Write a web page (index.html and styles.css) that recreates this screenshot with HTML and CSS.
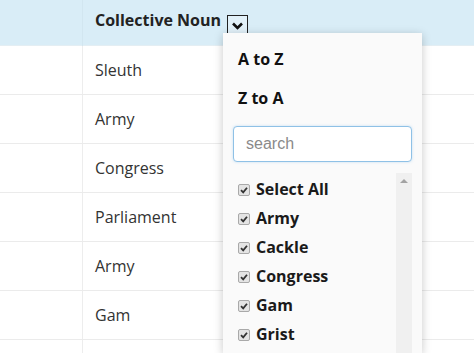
FILE: index.html
```html
<!DOCTYPE html>
<html>
<head>
    <title>Collective Nouns</title>
    <link rel="stylesheet" href="styles.css">
</head>
<body>
    <div class="page">
        <table class="grid">
            <thead>
                <tr>
                    <th class="col-animal"></th>
                    <th class="col-noun">Collective Noun <span class="filter-btn"><svg width="13" height="10" viewBox="0 0 13 10"><path d="M2 2.5 L6.5 7 L11 2.5" fill="none" stroke="#111" stroke-width="2.6"/></svg></span></th>
                </tr>
            </thead>
            <tbody>
                <tr><td></td><td>Sleuth</td></tr>
                <tr><td></td><td>Army</td></tr>
                <tr><td></td><td>Congress</td></tr>
                <tr><td></td><td>Parliament</td></tr>
                <tr><td></td><td>Army</td></tr>
                <tr><td></td><td>Gam</td></tr>
                <tr><td></td><td></td></tr>
            </tbody>
        </table>

        <div class="menu">
            <div class="sort-item">A to Z</div>
            <div class="sort-item">Z to A</div>
            <input class="search" type="text" placeholder="search">
            <div class="options">
                <ul class="option-list">
                    <li><span class="check"><svg width="10" height="10" viewBox="0 0 10 10"><path d="M2 5.2 L4.2 7.4 L8 2.8" fill="none" stroke="#333" stroke-width="1.8"/></svg></span>Select All</li>
                    <li><span class="check"><svg width="10" height="10" viewBox="0 0 10 10"><path d="M2 5.2 L4.2 7.4 L8 2.8" fill="none" stroke="#333" stroke-width="1.8"/></svg></span>Army</li>
                    <li><span class="check"><svg width="10" height="10" viewBox="0 0 10 10"><path d="M2 5.2 L4.2 7.4 L8 2.8" fill="none" stroke="#333" stroke-width="1.8"/></svg></span>Cackle</li>
                    <li><span class="check"><svg width="10" height="10" viewBox="0 0 10 10"><path d="M2 5.2 L4.2 7.4 L8 2.8" fill="none" stroke="#333" stroke-width="1.8"/></svg></span>Congress</li>
                    <li><span class="check"><svg width="10" height="10" viewBox="0 0 10 10"><path d="M2 5.2 L4.2 7.4 L8 2.8" fill="none" stroke="#333" stroke-width="1.8"/></svg></span>Gam</li>
                    <li><span class="check"><svg width="10" height="10" viewBox="0 0 10 10"><path d="M2 5.2 L4.2 7.4 L8 2.8" fill="none" stroke="#333" stroke-width="1.8"/></svg></span>Grist</li>
                </ul>
                <div class="scrollbar"><span class="arrow-up"></span></div>
            </div>
        </div>
    </div>
</body>
</html>
```

FILE: styles.css
```css
html, body {
    margin: 0;
    overflow: hidden;
    height: 100%;
}
body {
    font-family: "Open Sans", sans-serif;
    font-size: 16px;
    color: #333;
    background: #fff;
}
.page {
    position: relative;
    width: 474px;
    height: 353px;
    overflow: hidden;
}
.grid {
    border-collapse: collapse;
    width: 474px;
    table-layout: fixed;
}
.grid th {
    background: #d9edf7;
    height: 45px;
    padding: 0 12px;
    text-align: left;
    font-weight: bold;
    color: #222;
    vertical-align: middle;
}
.grid th.col-animal {
    width: 58px;
    border-right: 1px solid #d2e6f0;
}
.grid td {
    height: 48px;
    padding: 0 12px;
    border-bottom: 1px solid #ebebeb;
    vertical-align: middle;
}
.grid td:first-child {
    border-right: 1px solid #ededed;
}
.grid tbody tr:first-child td {
    border-top: 1px solid #e4eef3;
}
.filter-btn {
    display: inline-flex;
    align-items: center;
    justify-content: center;
    width: 19px;
    height: 20px;
    border: 1px solid #222;
    margin-left: 2px;
    vertical-align: -5px;
    background: #e2f1f9;
}
.menu {
    position: absolute;
    left: 223px;
    top: 33px;
    width: 199px;
    height: 320px;
    box-sizing: border-box;
    padding: 7px 10px 0;
    background: #fafafa;
    box-shadow: 0 2px 9px rgba(0, 0, 0, 0.22);
}
.sort-item {
    padding: 0 5px;
    line-height: 39px;
    font-weight: bold;
    color: #111;
}
.search {
    display: block;
    box-sizing: border-box;
    width: 179px;
    height: 36px;
    margin-top: 8px;
    padding: 0 12px;
    border: 1px solid #8fc1e6;
    border-radius: 4px;
    box-shadow: 0 0 3px rgba(102, 175, 233, 0.35);
    font-family: "Liberation Sans", Arial, sans-serif;
    font-size: 16px;
    background: #fff;
    outline: none;
}
.search::placeholder {
    color: #8a8a8a;
}
.options {
    display: flex;
    margin-top: 11px;
    height: 180px;
}
.option-list {
    flex: 1;
    list-style: none;
    margin: 0;
    padding: 2px 0 0 5px;
}
.option-list li {
    line-height: 29px;
    font-weight: bold;
    color: #1a1a1a;
    white-space: nowrap;
}
.check {
    display: inline-flex;
    align-items: center;
    justify-content: center;
    box-sizing: border-box;
    width: 12px;
    height: 12px;
    margin-right: 6px;
    border: 1px solid #a9a9a9;
    border-radius: 2px;
    background: #e4e4e4;
    vertical-align: 0px;
}
.scrollbar {
    width: 16px;
    background: #f0f0f0;
    display: flex;
    justify-content: center;
}
.arrow-up {
    margin-top: 6px;
    width: 0;
    height: 0;
    border-left: 4px solid transparent;
    border-right: 4px solid transparent;
    border-bottom: 4px solid #a3a3a3;
}
```
